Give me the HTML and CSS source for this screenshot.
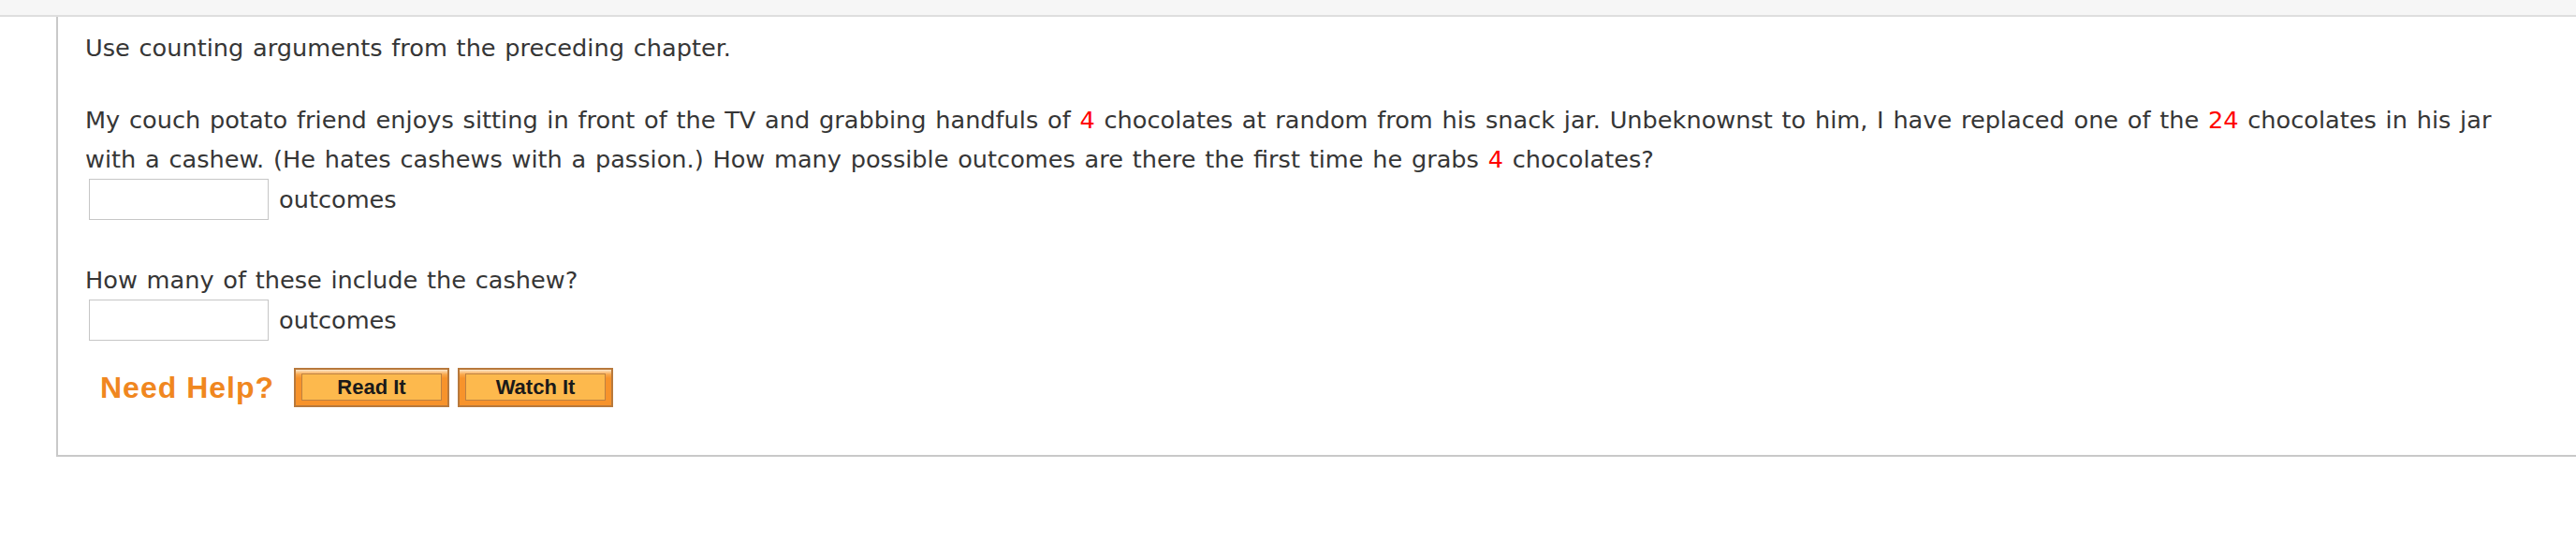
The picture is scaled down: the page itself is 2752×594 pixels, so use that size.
FILE: index.html
```html
<!DOCTYPE html>
<html lang="en">
<head>
<meta charset="utf-8">
<title>Counting question</title>
<link rel="stylesheet" href="styles.css">
</head>
<body>
<div class="topbar"></div>
<div class="question-box">
  <p class="intro">Use counting arguments from the preceding chapter.</p>
  <p class="problem">My couch potato friend enjoys sitting in front of the TV and grabbing handfuls of <span class="num">4</span> chocolates at random from his snack jar. Unbeknownst to him, I have replaced one of the <span class="num">24</span> chocolates in his jar with a cashew. (He hates cashews with a passion.) How many possible outcomes are there the first time he grabs <span class="num">4</span> chocolates?</p>
  <div class="answer-row">
    <input class="answer" type="text" aria-label="answer 1">
    <span class="unit">outcomes</span>
  </div>
  <p class="problem second">How many of these include the cashew?</p>
  <div class="answer-row">
    <input class="answer" type="text" aria-label="answer 2">
    <span class="unit">outcomes</span>
  </div>
  <div class="help-row">
    <span class="need-help">Need Help?</span>
    <button class="help-btn" type="button"><span class="help-btn-inner">Read It</span></button>
    <button class="help-btn" type="button"><span class="help-btn-inner">Watch It</span></button>
  </div>
</div>
</body>
</html>
```
FILE: styles.css
```css
html, body {
  margin: 0;
  padding: 0;
  background: #ffffff;
}

body {
  font-family: "DejaVu Sans", Verdana, sans-serif;
  font-size: 25.6px;
  word-spacing: 1.6px;
  color: #363636;
}

.topbar {
  height: 16px;
  background: #f6f6f6;
  border-bottom: 2px solid #dedede;
}

.question-box {
  margin-left: 60px;
  border-left: 2px solid #c9c9c9;
  border-bottom: 2px solid #c9c9c9;
  padding: 12px 60px 51px 29px;
}

.intro,
.problem {
  margin: 0;
  line-height: 42px;
}

.problem {
  margin-top: 35px;
}

.problem.second {
  margin-top: 43px;
}

.answer-row {
  display: flex;
  align-items: center;
  height: 44px;
}

.answer {
  box-sizing: border-box;
  width: 192px;
  height: 44px;
  margin: 0 0 0 4px;
  padding: 0;
  border: 1px solid #c6c6c6;
  background: #ffffff;
  font: inherit;
}

.unit {
  margin-left: 11px;
  line-height: 42px;
}

.num {
  color: #ff0000;
}

.help-row {
  display: flex;
  align-items: center;
  margin-top: 29px;
  margin-left: 16px;
  height: 42px;
  word-spacing: 0;
}

.need-help {
  font-family: "Liberation Sans", Arial, sans-serif;
  font-weight: bold;
  font-size: 32px;
  letter-spacing: 1px;
  color: #f0871f;
  margin-right: 21px;
}

.help-btn {
  box-sizing: border-box;
  width: 166px;
  height: 42px;
  margin: 0 9px 0 0;
  padding: 4px 6px 5px 6px;
  border: 2px solid #b8793c;
  border-radius: 0;
  background: linear-gradient(#fde6c8 0, #f9a84c 5px, #f7932b 9px, #f7932b 100%);
  display: flex;
  cursor: pointer;
}

.help-btn-inner {
  flex: 1;
  display: flex;
  align-items: center;
  justify-content: center;
  border: 1px solid #bd8142;
  background: #fdb94d;
  font-family: "Liberation Sans", Arial, sans-serif;
  font-weight: bold;
  font-size: 22px;
  color: #1a1a1a;
}
```
